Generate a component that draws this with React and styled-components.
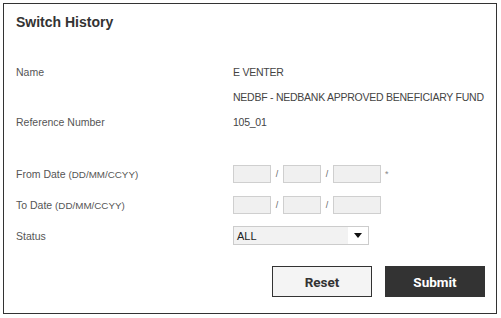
import React from 'react';
import styled, { createGlobalStyle } from 'styled-components';

const GlobalStyle = createGlobalStyle`
  body {
    margin: 0;
    background: #fff;
    font-family: "Liberation Sans", Arial, sans-serif;
  }
`;

const Panel = styled.section`
  margin: 3px;
  width: 494px;
  height: 311px;
  box-sizing: border-box;
  border: 1px solid #333;
  padding: 0 11px 0 12px;
  display: flex;
  flex-direction: column;
`;

const Title = styled.h2`
  margin: 8px 0 0;
  height: 20px;
  line-height: 20px;
  font-size: 14px;
  font-weight: bold;
  color: #333;
`;

const Section = styled.div`
  margin-top: ${(p) => p.$top}px;
  display: flex;
  flex-direction: column;
`;

const Row = styled.div`
  display: grid;
  grid-template-columns: 217px 1fr;
  align-items: center;
  height: ${(p) => p.$h}px;
  font-size: 10.5px;
  color: #555;
`;

const Label = styled.div`
  color: #555;
  white-space: nowrap;
`;

const Hint = styled.span`
  font-size: 9.8px;
`;

const Value = styled.div`
  color: #444;
  display: flex;
  align-items: center;
  white-space: nowrap;
  letter-spacing: -0.25px;
`;

const DateBox = styled.input`
  box-sizing: border-box;
  width: ${(p) => p.$w}px;
  height: 18px;
  padding: 0;
  border: 1px solid #cfcfcf;
  background: #f0f0f0;
`;

const Sep = styled.span`
  width: 12px;
  text-align: center;
  font-size: 9px;
  color: #666;
`;

const Star = styled.span`
  margin-left: 4px;
  font-size: 9px;
  color: #888;
`;

const SelectBox = styled.div`
  box-sizing: border-box;
  width: 136px;
  height: 19px;
  border: 1px solid #ccc;
  background: #fff;
  display: flex;
  align-items: stretch;
`;

const SelectValue = styled.div`
  flex: 1;
  background: #f2f2f2;
  padding-left: 3px;
  display: flex;
  align-items: center;
  font-size: 11px;
  letter-spacing: 0;
  color: #222;
`;

const SelectArrow = styled.div`
  width: 20px;
  display: flex;
  align-items: center;
  justify-content: center;
`;

const Actions = styled.div`
  margin-top: 15px;
  display: flex;
  justify-content: flex-end;
  gap: 13px;
`;

const Button = styled.button`
  box-sizing: border-box;
  width: 100px;
  height: 31px;
  border: 1px solid #333;
  background: ${(p) => (p.$primary ? '#333' : '#f4f4f4')};
  color: ${(p) => (p.$primary ? '#fff' : '#333')};
  font-family: Roboto, "Liberation Sans", sans-serif;
  font-weight: bold;
  font-size: 13.5px;
  padding: 0;
`;

const DateRow = ({ label, required }) => (
  <Row $h={31}>
    <Label>
      {label} <Hint>(DD/MM/CCYY)</Hint>
    </Label>
    <Value>
      <DateBox $w={38} />
      <Sep>/</Sep>
      <DateBox $w={38} />
      <Sep>/</Sep>
      <DateBox $w={48} />
      {required && <Star>*</Star>}
    </Value>
  </Row>
);

export default function App() {
  return (
    <>
      <GlobalStyle />
      <Panel>
        <Title>Switch History</Title>
        <Section $top={27}>
          <Row $h={25}>
            <Label>Name</Label>
            <Value>E VENTER</Value>
          </Row>
          <Row $h={25}>
            <Label></Label>
            <Value>NEDBF - NEDBANK APPROVED BENEFICIARY FUND</Value>
          </Row>
          <Row $h={25}>
            <Label>Reference Number</Label>
            <Value>105_01</Value>
          </Row>
        </Section>
        <Section $top={24}>
          <DateRow label="From Date" required />
          <DateRow label="To Date" />
          <Row $h={31}>
            <Label>Status</Label>
            <Value>
              <SelectBox>
                <SelectValue>ALL</SelectValue>
                <SelectArrow>
                  <svg width="8" height="5" viewBox="0 0 8 5">
                    <path d="M0 0h8L4 5z" fill="#111" />
                  </svg>
                </SelectArrow>
              </SelectBox>
            </Value>
          </Row>
        </Section>
        <Actions>
          <Button>Reset</Button>
          <Button $primary>Submit</Button>
        </Actions>
      </Panel>
    </>
  );
}
